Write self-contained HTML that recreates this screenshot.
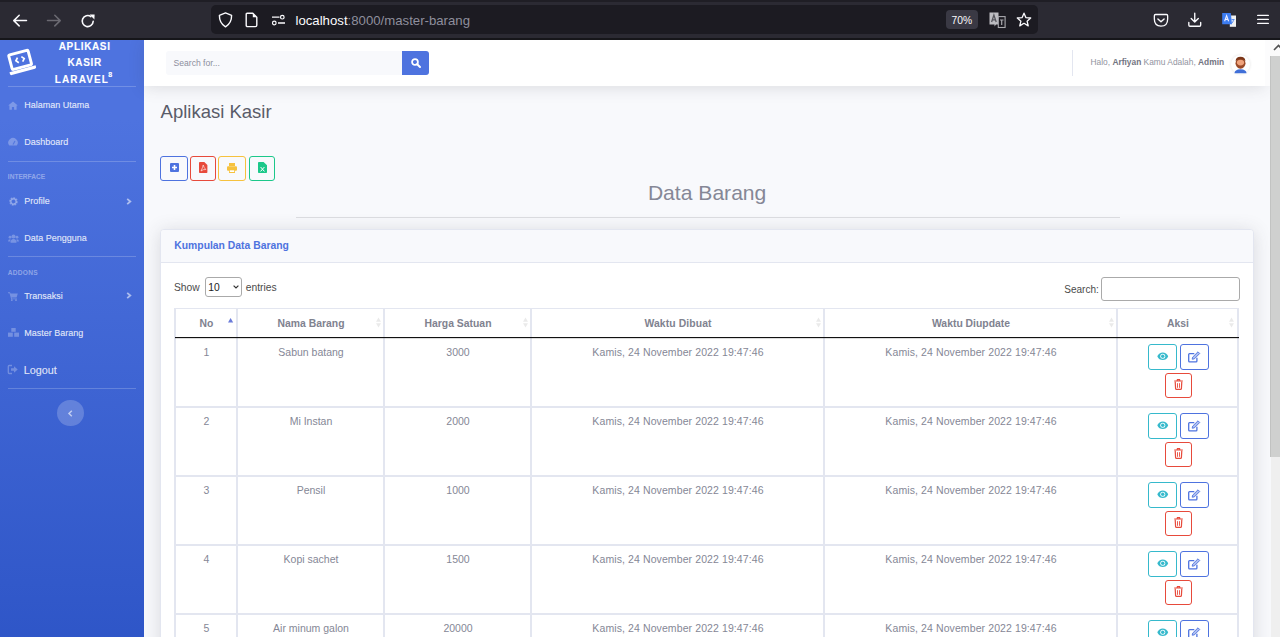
<!DOCTYPE html>
<html><head><meta charset="utf-8">
<style>
*{box-sizing:border-box;margin:0;padding:0}
html,body{width:1280px;height:637px;overflow:hidden;background:#2b2a33;font-family:"Liberation Sans",sans-serif}
.a{position:absolute;white-space:nowrap;line-height:1}
.r{position:absolute}
#page{position:absolute;left:0;top:40px;width:1280px;height:597px;background:#f8f9fc;overflow:hidden}
#side{position:absolute;left:0;top:0;width:144px;height:597px;background:linear-gradient(180deg,#4e73df 80px,#224abe 807px)}
.hr{position:absolute;left:8px;width:128px;height:1px;background:rgba(255,255,255,.2)}
svg{position:absolute;overflow:visible}
.btn{position:absolute;border:1px solid;border-radius:3px}
</style></head><body>
<div class="r" style="left:0;top:0;width:1280px;height:2px;background:#1f1e25"></div><div class="r" style="left:0;top:2px;width:1280px;height:36px;background:#2b2a33"></div><div class="r" style="left:0;top:38px;width:1280px;height:2px;background:#16161a"></div><div class="r" style="left:211px;top:5px;width:827px;height:29px;background:#1c1b22;border-radius:5px"></div><div class="a" style="left:295.50px;top:14.12px;font-size:13.2px;color:#fbfbfe;">localhost<span style="color:#8f8f9d">:8000/master-barang</span></div>
<div class="r" style="left:945.5px;top:10.3px;width:32px;height:18.5px;background:#3a3944;border-radius:4px"></div><div class="a" style="left:951.50px;top:15.88px;font-size:10.3px;color:#fbfbfe;">70%</div>
<svg style="left:12px;top:14px" width="16" height="14" viewBox="0 0 16 14"><path d="M14.5 6.6 H2 M7.2 1.3 L1.8 6.6 L7.2 11.9" stroke="#fbfbfe" stroke-width="1.5" fill="none" stroke-linecap="round" stroke-linejoin="round"/></svg><svg style="left:46px;top:14px" width="16" height="14" viewBox="0 0 16 14"><path d="M1.5 6.6 H14 M8.8 1.3 L14.2 6.6 L8.8 11.9" stroke="#6b6a72" stroke-width="1.5" fill="none" stroke-linecap="round" stroke-linejoin="round"/></svg><svg style="left:80px;top:13px" width="16" height="16" viewBox="0 0 16 16"><path d="M13.2 8.3 A5.5 5.5 0 1 1 10.9 3.6" stroke="#fbfbfe" stroke-width="1.6" fill="none" stroke-linecap="round"/><path d="M9.6 1.6 L14.6 1.4 L14.4 6.4Z" fill="#fbfbfe"/></svg><svg style="left:218px;top:12px" width="15" height="16" viewBox="0 0 15 16"><path d="M7.5 0.9 L13.6 3.3 Q13.8 11 7.5 14.9 Q1.2 11 1.4 3.3Z" stroke="#fbfbfe" stroke-width="1.4" fill="none" stroke-linejoin="round"/></svg><svg style="left:245.3px;top:12.3px" width="13" height="16" viewBox="0 0 13 16"><path d="M2.2 1.2 H7.8 L11.8 5.2 V13.2 Q11.8 14.6 10.4 14.6 H2.6 Q1.2 14.6 1.2 13.2 V2.4 Q1.2 1.2 2.2 1.2Z" stroke="#fbfbfe" stroke-width="1.4" fill="none" stroke-linejoin="round"/><path d="M7.8 1.2 V5.2 H11.8Z" fill="#fbfbfe"/></svg><svg style="left:271px;top:14px" width="15" height="12" viewBox="0 0 15 12"><path d="M1 3.2 H8.5 M7 9 H14" stroke="#fbfbfe" stroke-width="1.3"/><circle cx="11.3" cy="3.2" r="1.8" stroke="#fbfbfe" stroke-width="1.2" fill="none"/><circle cx="3.3" cy="9" r="1.8" stroke="#fbfbfe" stroke-width="1.2" fill="none"/></svg><svg style="left:988.5px;top:11.5px" width="18" height="17" viewBox="0 0 18 17"><path d="M0.5 0.5 H9.5 V12.5 H7 L5.5 14.5 V12.5 H0.5Z" fill="#bdbdc2"/><rect x="9.3" y="4.6" width="6.8" height="10.9" fill="#1c1b22" stroke="#a9a9ae" stroke-width="1.1"/><path d="M2.6 10 L4.9 3 L7.2 10 M3.5 7.8 H6.3" stroke="#55555c" stroke-width="1.3" fill="none"/><path d="M11 8 H14.5 M12.7 8 V13" stroke="#a9a9ae" stroke-width="1.2"/></svg><svg style="left:1015.5px;top:12px" width="16" height="16" viewBox="0 0 17 17"><path d="M8.5 1.3 L10.6 6 L15.6 6.4 L11.8 9.7 L13 14.7 L8.5 12 L4 14.7 L5.2 9.7 L1.4 6.4 L6.4 6 Z" stroke="#fbfbfe" stroke-width="1.4" fill="none" stroke-linejoin="round"/></svg><svg style="left:1152.5px;top:12.8px" width="16" height="15" viewBox="0 0 17 16"><path d="M2.6 1.6 H14.4 Q15.6 1.6 15.6 2.8 V6.5 Q15.6 14 8.5 14 Q1.4 14 1.4 6.5 V2.8 Q1.4 1.6 2.6 1.6Z" stroke="#fbfbfe" stroke-width="1.4" fill="none"/><path d="M5.2 6.3 L8.5 9.4 L11.8 6.3" stroke="#fbfbfe" stroke-width="1.5" fill="none" stroke-linecap="round" stroke-linejoin="round"/></svg><svg style="left:1187px;top:11.5px" width="15.5" height="16" viewBox="0 0 17 17"><path d="M8.5 1 V10.5 M4.6 6.8 L8.5 10.7 L12.4 6.8" stroke="#fbfbfe" stroke-width="1.5" fill="none" stroke-linecap="round" stroke-linejoin="round"/><path d="M2 11.2 V14 Q2 15.3 3.3 15.3 H13.7 Q15 15.3 15 14 V11.2" stroke="#fbfbfe" stroke-width="1.5" fill="none" stroke-linecap="round"/></svg><svg style="left:1221px;top:12px" width="16" height="16" viewBox="0 0 16 16"><rect x="8.8" y="3.5" width="6.2" height="11.3" fill="#f1f1f1"/><path d="M1.2 0.9 H9.8 L11 12.2 H1.2Z" fill="#3c7cf0"/><path d="M3.6 9.2 L5.6 3.6 L7.6 9.2 M4.3 7.4 H6.9" stroke="#eef" stroke-width="1.1" fill="none"/><path d="M10.5 7.5 H13.5 M12.6 7.5 Q12 10.5 10.6 11.5" stroke="#4f86f0" stroke-width="0.9" fill="none"/></svg><svg style="left:1256px;top:13px" width="14" height="13" viewBox="0 0 14 13"><path d="M1.7 2.4 H12.3 M1.7 6.4 H12.3 M1.7 10.4 H12.3" stroke="#fbfbfe" stroke-width="1.4" stroke-linecap="round"/></svg><div id="page">
<div id="side"></div><div class="a" style="left:34.70px;width:100.00px;text-align:center;top:2.20px;font-size:10px;color:#fff;font-weight:bold;letter-spacing:0.65px;-webkit-text-stroke:0.1px #fff;">APLIKASI</div>
<div class="a" style="left:34.70px;width:100.00px;text-align:center;top:18.40px;font-size:10px;color:#fff;font-weight:bold;letter-spacing:0.65px;-webkit-text-stroke:0.1px #fff;">KASIR</div>
<div class="a" style="left:33.50px;width:100.00px;text-align:center;top:34.50px;font-size:10px;color:#fff;font-weight:bold;letter-spacing:1.1px;-webkit-text-stroke:0.1px #fff;">LARAVEL<sup style="font-size:7px;position:relative;top:-3.3px;vertical-align:top;letter-spacing:0;margin-left:-0.8px">8</sup></div>
<div class="hr" style="top:45.8px"></div><div class="hr" style="top:120.6px"></div><div class="hr" style="top:215.8px"></div><div class="hr" style="top:348.3px"></div><div class="a" style="left:24.20px;top:61.28px;font-size:9px;color:rgba(255,255,255,.82);-webkit-text-stroke:0.2px rgba(255,255,255,.6);">Halaman Utama</div>
<div class="a" style="left:24.20px;top:98.18px;font-size:9px;color:rgba(255,255,255,.82);-webkit-text-stroke:0.2px rgba(255,255,255,.6);">Dashboard</div>
<div class="a" style="left:24.20px;top:156.68px;font-size:9px;color:rgba(255,255,255,.82);-webkit-text-stroke:0.2px rgba(255,255,255,.6);">Profile</div>
<div class="a" style="left:24.20px;top:193.58px;font-size:9px;color:rgba(255,255,255,.82);-webkit-text-stroke:0.2px rgba(255,255,255,.6);">Data Pengguna</div>
<div class="a" style="left:24.20px;top:252.08px;font-size:9px;color:rgba(255,255,255,.82);-webkit-text-stroke:0.2px rgba(255,255,255,.6);">Transaksi</div>
<div class="a" style="left:24.20px;top:288.98px;font-size:9px;color:rgba(255,255,255,.82);-webkit-text-stroke:0.2px rgba(255,255,255,.6);">Master Barang</div>
<div class="a" style="left:23.80px;top:324.66px;font-size:10.8px;color:rgba(255,255,255,.82);-webkit-text-stroke:0.2px rgba(255,255,255,.6);">Logout</div>
<div class="a" style="left:7.80px;top:134.41px;font-size:6.6px;color:rgba(255,255,255,.4);font-weight:bold;">INTERFACE</div>
<div class="a" style="left:7.80px;top:230.01px;font-size:6.6px;color:rgba(255,255,255,.4);font-weight:bold;letter-spacing:0.25px;">ADDONS</div>
<svg style="left:8px;top:60.5px" width="10" height="9" viewBox="0 0 10 9"><path d="M5 0.5 L9.8 4.6 L8.6 4.6 L8.6 8.8 L6.1 8.8 L6.1 6 L3.9 6 L3.9 8.8 L1.4 8.8 L1.4 4.6 L0.2 4.6 Z" fill="rgba(255,255,255,.27)"/></svg><svg style="left:8px;top:98.30000000000001px" width="10" height="8" viewBox="0 0 10 8"><path d="M1.3 7.6 A4.7 4.7 0 1 1 8.7 7.6 Z" fill="rgba(255,255,255,.27)"/><path d="M5 6.5 L7 3" stroke="rgba(78,115,222,.9)" stroke-width="1.1"/></svg><svg style="left:8.5px;top:156.5px" width="9" height="9" viewBox="0 0 9 9"><circle cx="4.5" cy="4.5" r="3.3" fill="none" stroke="rgba(255,255,255,.27)" stroke-width="2.2" stroke-dasharray="1.6 0.9"/><circle cx="4.5" cy="4.5" r="2.6" fill="none" stroke="rgba(255,255,255,.27)" stroke-width="1.6"/></svg><svg style="left:8px;top:193.5px" width="11" height="9" viewBox="0 0 11 9"><circle cx="5.5" cy="2.6" r="2" fill="rgba(255,255,255,.27)"/><circle cx="2" cy="3.2" r="1.4" fill="rgba(255,255,255,.27)"/><circle cx="9" cy="3.2" r="1.4" fill="rgba(255,255,255,.27)"/><path d="M2.5 8.8 Q2.5 5 5.5 5 Q8.5 5 8.5 8.8Z M0 7.5 Q0 5.2 2.4 5.2 L2.4 7.5Z M11 7.5 Q11 5.2 8.6 5.2 L8.6 7.5Z" fill="rgba(255,255,255,.27)"/></svg><svg style="left:8px;top:251.5px" width="10" height="9" viewBox="0 0 10 9"><path d="M0 0.3 L2 0.3 L2.6 1.5 L9.8 1.5 L8.6 5.6 L3.6 5.6 L3.9 6.5 L9 6.5 L9 7.2 L3.2 7.2 L1.5 1.2 L0 1.2Z" fill="rgba(255,255,255,.27)"/><circle cx="3.8" cy="8.2" r="0.9" fill="rgba(255,255,255,.27)"/><circle cx="8" cy="8.2" r="0.9" fill="rgba(255,255,255,.27)"/></svg><svg style="left:8px;top:288px" width="11" height="9" viewBox="0 0 11 9"><rect x="3.3" y="0" width="4.4" height="3.8" fill="rgba(255,255,255,.27)"/><rect x="0" y="4.6" width="4.8" height="4.2" fill="rgba(255,255,255,.27)"/><rect x="6.2" y="4.6" width="4.8" height="4.2" fill="rgba(255,255,255,.27)"/></svg><svg style="left:8px;top:325px" width="10" height="9" viewBox="0 0 10 9"><path d="M4 0.5 L1.2 0.5 Q0.3 0.5 0.3 1.4 L0.3 7.6 Q0.3 8.5 1.2 8.5 L4 8.5" stroke="rgba(255,255,255,.27)" stroke-width="1.3" fill="none"/><path d="M3 3.3 L6 3.3 L6 1.2 L9.7 4.5 L6 7.8 L6 5.7 L3 5.7Z" fill="rgba(255,255,255,.27)"/></svg><svg style="left:126px;top:157.5px" width="6" height="7" viewBox="0 0 6 7"><path d="M1.2 0.9 L4.3 3.5 L1.2 6.1" stroke="rgba(255,255,255,.55)" stroke-width="1.8" fill="none"/></svg><svg style="left:126px;top:252.3px" width="6" height="7" viewBox="0 0 6 7"><path d="M1.2 0.9 L4.3 3.5 L1.2 6.1" stroke="rgba(255,255,255,.55)" stroke-width="1.8" fill="none"/></svg><div class="r" style="left:57.4px;top:359.5px;width:26.6px;height:26.6px;border-radius:50%;background:rgba(255,255,255,.2)"></div><svg style="left:68px;top:369.5px" width="5" height="7" viewBox="0 0 5 7"><path d="M3.8 0.8 L1 3.5 L3.8 6.2" stroke="rgba(255,255,255,.6)" stroke-width="1.5" fill="none"/></svg><svg style="left:6px;top:8px" width="32" height="30" viewBox="0 0 32 30"><g transform="rotate(-15 16 15)"><rect x="5" y="4" width="20" height="15" rx="1.2" fill="none" stroke="#fff" stroke-width="2.9"/><path d="M1.5 20.8 L28.5 20.8 L28.5 22.6 Q28.5 24 27 24 L3 24 Q1.5 24 1.5 22.6Z" fill="#fff"/><path d="M13 8.7 L10.7 11.3 L13 13.9 M17 8.7 L19.3 11.3 L17 13.9" stroke="#fff" stroke-width="1.7" fill="none"/></g></svg><div class="r" style="left:144px;top:0;width:1121px;height:46px;background:#fff;box-shadow:0 2px 16px rgba(58,59,69,.15)"></div><div class="r" style="left:166px;top:11px;width:236px;height:24px;background:#f8f9fc;border-radius:3px 0 0 3px"></div><div class="r" style="left:402px;top:11px;width:27px;height:24px;background:#4e73df;border-radius:0 3px 3px 0"></div><svg style="left:410.5px;top:17.8px" width="10" height="10" viewBox="0 0 10 10"><circle cx="4" cy="4" r="2.9" stroke="#fff" stroke-width="1.8" fill="none"/><path d="M6.2 6.2 L9 9" stroke="#fff" stroke-width="2" stroke-linecap="round"/></svg><div class="a" style="left:173.50px;top:19.22px;font-size:8.6px;color:#8d8f9c;">Search for...</div>
<div class="r" style="left:1071.5px;top:10px;width:1px;height:26px;background:#e3e6f0"></div><div class="a" style="left:1090.50px;top:18.09px;font-size:8.4px;color:#9193a0;">Halo, <b style="color:#737582">Arfiyan</b> Kamu Adalah, <b style="color:#737582">Admin</b></div>
<div class="r" style="left:1231px;top:15px;width:19px;height:19px;border-radius:50%;background:#fff;box-shadow:0 0 3px rgba(0,0,0,.12)"></div><svg style="left:1233px;top:15.5px" width="15" height="18" viewBox="0 0 15 18"><path d="M1.5 17.2 Q1.5 13.5 7.5 13.2 Q13.5 13.5 13.5 17.2Z" fill="#3f6fd8"/><ellipse cx="7.5" cy="7.3" rx="5" ry="5.4" fill="#9b4a28"/><ellipse cx="7.5" cy="6.6" rx="3.6" ry="2.8" fill="#f0a37c"/><path d="M2.6 5 Q3 0.8 7.5 0.8 Q12 0.8 12.4 5 Q10 3 7.5 3.3 Q5 3 2.6 5Z" fill="#7a3518"/></svg><div class="r" style="left:1265px;top:0;width:6px;height:46px;background:#fcfcfd"></div><div class="r" style="left:1270.5px;top:0;width:10px;height:597px;background:#efefef"></div><div class="r" style="left:1270px;top:0;width:10px;height:16px;background:#fafafa"></div><div class="r" style="left:1270px;top:16px;width:12px;height:401px;background:#cfd0cf;border-left:1px solid #c2c3c2"></div><svg style="left:1272.5px;top:3.5px" width="10" height="7" viewBox="0 0 10 7"><path d="M1 6 L5.5 1.5 L10 6" stroke="#505050" stroke-width="1.6" fill="none"/></svg><div class="a" style="left:160.60px;top:62.84px;font-size:18.5px;color:#5a5c69;">Aplikasi Kasir</div>
<div class="btn" style="left:160px;top:116px;width:28px;height:25px;border-color:#4e73df"></div><div class="btn" style="left:190px;top:116px;width:26px;height:25px;border-color:#e74a3b"></div><div class="btn" style="left:218px;top:116px;width:28px;height:25px;border-color:#f6c23e"></div><div class="btn" style="left:249px;top:116px;width:26px;height:25px;border-color:#1cc88a"></div><svg style="left:169.5px;top:123.3px" width="9" height="9" viewBox="0 0 9 9"><rect width="9" height="9" rx="1" fill="#4e73df"/><path d="M4.5 2 V7 M2 4.5 H7" stroke="#fff" stroke-width="1.6"/></svg><svg style="left:198.6px;top:122.3px" width="8.4" height="11" viewBox="0 0 8.4 11"><path d="M0 0.8 Q0 0 0.8 0 L5.3 0 L8.4 3 L8.4 10.2 Q8.4 11 7.6 11 L0.8 11 Q0 11 0 10.2Z" fill="#e74a3b"/><path d="M2 9 Q4 5 4.2 3 Q5 6 6.8 7.5 Q4 7.2 2 9Z" stroke="#fff" stroke-width="0.6" fill="none"/></svg><svg style="left:226.7px;top:122.8px" width="10" height="10" viewBox="0 0 10 10"><rect x="2" y="0" width="6" height="3" fill="#f6c23e"/><rect x="0" y="3.2" width="10" height="4.6" rx="1" fill="#f6c23e"/><rect x="2" y="6.5" width="6" height="3.5" fill="#f6c23e"/><rect x="2.8" y="7.3" width="4.4" height="1.7" fill="#fff"/></svg><svg style="left:257.5px;top:122.3px" width="9" height="11" viewBox="0 0 9 11"><path d="M0 0.8 Q0 0 0.8 0 L5.6 0 L9 3.2 L9 10.2 Q9 11 8.2 11 L0.8 11 Q0 11 0 10.2Z" fill="#1cc88a"/><path d="M2.6 5 L6.4 9.4 M6.4 5 L2.6 9.4" stroke="#fff" stroke-width="1"/></svg><div class="a" style="left:647.90px;top:142.13px;font-size:21.1px;color:#858796;">Data Barang</div>
<div class="r" style="left:296px;top:177px;width:824px;height:1px;background:#dcdde1"></div><div class="r" style="left:160px;top:189px;width:1093.5px;height:460px;background:#fff;border:1px solid #e3e6f0;border-radius:4px;box-shadow:0 2px 18px rgba(58,59,69,.17)"></div><div class="r" style="left:161px;top:190px;width:1091.5px;height:33px;background:#f8f9fc;border-bottom:1px solid #e3e6f0;border-radius:3px 3px 0 0"></div><div class="a" style="left:174.30px;top:201.02px;font-size:10.37px;color:#4e73df;font-weight:bold;">Kumpulan Data Barang</div>
<div class="a" style="left:174.00px;top:242.98px;font-size:10.3px;color:#4b4b4b;">Show</div>
<div class="r" style="left:205px;top:236.5px;width:37px;height:20.5px;border:1px solid #aaa;border-radius:3px;background:#fff"></div><div class="a" style="left:208.30px;top:242.98px;font-size:10.3px;color:#222;">10</div>
<svg style="left:233px;top:245px" width="6" height="4" viewBox="0 0 6 4"><path d="M0.6 0.6 L3 3 L5.4 0.6" stroke="#333" stroke-width="1.2" fill="none"/></svg><div class="a" style="left:245.80px;top:242.98px;font-size:10.3px;color:#4b4b4b;">entries</div>
<div class="a" style="left:1064.30px;top:244.53px;font-size:10px;color:#4b4b4b;">Search:</div>
<div class="r" style="left:1101px;top:236.5px;width:138.5px;height:24px;border:1px solid #aaa;border-radius:3px;background:#fff"></div><div class="r" style="left:175px;top:268px;width:1064px;height:1px;background:#e3e6f0"></div><div class="r" style="left:174.3px;top:268px;width:1.8px;height:400px;background:#e3e6f0"></div><div class="r" style="left:236.3px;top:268px;width:1.8px;height:400px;background:#e3e6f0"></div><div class="r" style="left:383.3px;top:268px;width:1.8px;height:400px;background:#e3e6f0"></div><div class="r" style="left:530.3px;top:268px;width:1.8px;height:400px;background:#e3e6f0"></div><div class="r" style="left:823.3px;top:268px;width:1.8px;height:400px;background:#e3e6f0"></div><div class="r" style="left:1116.3px;top:268px;width:1.8px;height:400px;background:#e3e6f0"></div><div class="r" style="left:1237.3px;top:268px;width:1.8px;height:400px;background:#e3e6f0"></div><div class="r" style="left:175px;top:297px;width:1064px;height:1px;background:#111"></div><div class="r" style="left:175px;top:298px;width:1064px;height:1px;background:rgba(17,17,17,.15)"></div><div class="r" style="left:175px;top:366.0px;width:1064px;height:1.5px;background:#e3e6f0"></div><div class="r" style="left:175px;top:435.0px;width:1064px;height:1.5px;background:#e3e6f0"></div><div class="r" style="left:175px;top:504.0px;width:1064px;height:1.5px;background:#e3e6f0"></div><div class="r" style="left:175px;top:573.0px;width:1064px;height:1.5px;background:#e3e6f0"></div><div class="a" style="left:176.00px;width:61.00px;text-align:center;top:278.79px;font-size:10.4px;color:#80828f;font-weight:bold;">No</div>
<div class="a" style="left:238.00px;width:146.00px;text-align:center;top:278.79px;font-size:10.4px;color:#80828f;font-weight:bold;">Nama Barang</div>
<div class="a" style="left:385.00px;width:146.00px;text-align:center;top:278.79px;font-size:10.4px;color:#80828f;font-weight:bold;">Harga Satuan</div>
<div class="a" style="left:532.00px;width:292.00px;text-align:center;top:278.79px;font-size:10.4px;color:#80828f;font-weight:bold;letter-spacing:0.1px;">Waktu Dibuat</div>
<div class="a" style="left:825.00px;width:292.00px;text-align:center;top:278.79px;font-size:10.4px;color:#80828f;font-weight:bold;">Waktu Diupdate</div>
<div class="a" style="left:1118.00px;width:120.00px;text-align:center;top:278.79px;font-size:10.4px;color:#80828f;font-weight:bold;">Aksi</div>
<svg style="left:227.8px;top:277.8px" width="5.2" height="4.4" viewBox="0 0 5.2 4.4"><path d="M2.6 0 L5.2 4.4 L0 4.4Z" fill="#6a7bd9"/></svg><svg style="left:375.5px;top:277px" width="5" height="11" viewBox="0 0 5 11"><path d="M2.5 0.5 L5 4.8 L0 4.8Z M2.5 10.5 L5 6.2 L0 6.2Z" fill="#eaeaea"/></svg><svg style="left:522.5px;top:277px" width="5" height="11" viewBox="0 0 5 11"><path d="M2.5 0.5 L5 4.8 L0 4.8Z M2.5 10.5 L5 6.2 L0 6.2Z" fill="#eaeaea"/></svg><svg style="left:815.5px;top:277px" width="5" height="11" viewBox="0 0 5 11"><path d="M2.5 0.5 L5 4.8 L0 4.8Z M2.5 10.5 L5 6.2 L0 6.2Z" fill="#eaeaea"/></svg><svg style="left:1108.5px;top:277px" width="5" height="11" viewBox="0 0 5 11"><path d="M2.5 0.5 L5 4.8 L0 4.8Z M2.5 10.5 L5 6.2 L0 6.2Z" fill="#eaeaea"/></svg><svg style="left:1229.0px;top:277px" width="5" height="11" viewBox="0 0 5 11"><path d="M2.5 0.5 L5 4.8 L0 4.8Z M2.5 10.5 L5 6.2 L0 6.2Z" fill="#eaeaea"/></svg><div class="a" style="left:176.00px;width:61.00px;text-align:center;top:306.91px;font-size:10.5px;color:#858796;">1</div>
<div class="a" style="left:238.00px;width:146.00px;text-align:center;top:306.91px;font-size:10.5px;color:#858796;">Sabun batang</div>
<div class="a" style="left:385.00px;width:146.00px;text-align:center;top:306.91px;font-size:10.5px;color:#858796;">3000</div>
<div class="a" style="left:532.00px;width:292.00px;text-align:center;top:306.91px;font-size:10.5px;color:#858796;letter-spacing:0.1px;">Kamis, 24 November 2022 19:47:46</div>
<div class="a" style="left:825.00px;width:292.00px;text-align:center;top:306.91px;font-size:10.5px;color:#858796;letter-spacing:0.1px;">Kamis, 24 November 2022 19:47:46</div>
<div class="btn" style="left:1148px;top:304.3px;width:29px;height:25.5px;border-color:#36b9cc"></div><div class="btn" style="left:1180px;top:304.3px;width:29px;height:25.5px;border-color:#4e73df"></div><div class="btn" style="left:1165px;top:333.0px;width:27px;height:25px;border-color:#e74a3b"></div><svg style="left:1156.6px;top:312.0px" width="11.5" height="8.5" viewBox="0 0 11.5 8.5"><path d="M0.3 4.25 C2.2 -0.9 9.3 -0.9 11.2 4.25 C9.3 9.4 2.2 9.4 0.3 4.25Z" fill="#36b9cc"/><circle cx="5.75" cy="4.25" r="2.5" fill="#fff"/><circle cx="5.75" cy="4.25" r="1.7" fill="#36b9cc"/></svg><svg style="left:1188.2px;top:310.8px" width="12.5" height="11.5" viewBox="0 0 12.5 11.5"><path d="M6.3 2.6 L1.6 2.6 Q0.7 2.6 0.7 3.5 L0.7 9.9 Q0.7 10.8 1.6 10.8 L8 10.8 Q8.9 10.8 8.9 9.9 L8.9 6.8" stroke="#4e73df" stroke-width="1.3" fill="none"/><path d="M4.2 8.2 L4.6 6.2 L10 0.8 L11.7 2.5 L6.3 7.9 Z" stroke="#4e73df" stroke-width="0.9" fill="rgba(78,115,223,.45)" stroke-linejoin="round"/></svg><svg style="left:1173.8px;top:339.3px" width="9" height="11" viewBox="0 0 9 11"><path d="M0.2 2 H8.8 M3 2 L3.4 0.6 H5.6 L6 2" stroke="#e74a3b" stroke-width="1.1" fill="none"/><path d="M1.2 2.6 L1.6 9.6 Q1.7 10.4 2.5 10.4 H6.5 Q7.3 10.4 7.4 9.6 L7.8 2.6" stroke="#e74a3b" stroke-width="1.2" fill="none"/><path d="M3.5 4.2 V8.8 M5.5 4.2 V8.8" stroke="#e74a3b" stroke-width="0.9"/></svg><div class="a" style="left:176.00px;width:61.00px;text-align:center;top:375.91px;font-size:10.5px;color:#858796;">2</div>
<div class="a" style="left:238.00px;width:146.00px;text-align:center;top:375.91px;font-size:10.5px;color:#858796;">Mi Instan</div>
<div class="a" style="left:385.00px;width:146.00px;text-align:center;top:375.91px;font-size:10.5px;color:#858796;">2000</div>
<div class="a" style="left:532.00px;width:292.00px;text-align:center;top:375.91px;font-size:10.5px;color:#858796;letter-spacing:0.1px;">Kamis, 24 November 2022 19:47:46</div>
<div class="a" style="left:825.00px;width:292.00px;text-align:center;top:375.91px;font-size:10.5px;color:#858796;letter-spacing:0.1px;">Kamis, 24 November 2022 19:47:46</div>
<div class="btn" style="left:1148px;top:373.3px;width:29px;height:25.5px;border-color:#36b9cc"></div><div class="btn" style="left:1180px;top:373.3px;width:29px;height:25.5px;border-color:#4e73df"></div><div class="btn" style="left:1165px;top:402.0px;width:27px;height:25px;border-color:#e74a3b"></div><svg style="left:1156.6px;top:381.0px" width="11.5" height="8.5" viewBox="0 0 11.5 8.5"><path d="M0.3 4.25 C2.2 -0.9 9.3 -0.9 11.2 4.25 C9.3 9.4 2.2 9.4 0.3 4.25Z" fill="#36b9cc"/><circle cx="5.75" cy="4.25" r="2.5" fill="#fff"/><circle cx="5.75" cy="4.25" r="1.7" fill="#36b9cc"/></svg><svg style="left:1188.2px;top:379.8px" width="12.5" height="11.5" viewBox="0 0 12.5 11.5"><path d="M6.3 2.6 L1.6 2.6 Q0.7 2.6 0.7 3.5 L0.7 9.9 Q0.7 10.8 1.6 10.8 L8 10.8 Q8.9 10.8 8.9 9.9 L8.9 6.8" stroke="#4e73df" stroke-width="1.3" fill="none"/><path d="M4.2 8.2 L4.6 6.2 L10 0.8 L11.7 2.5 L6.3 7.9 Z" stroke="#4e73df" stroke-width="0.9" fill="rgba(78,115,223,.45)" stroke-linejoin="round"/></svg><svg style="left:1173.8px;top:408.3px" width="9" height="11" viewBox="0 0 9 11"><path d="M0.2 2 H8.8 M3 2 L3.4 0.6 H5.6 L6 2" stroke="#e74a3b" stroke-width="1.1" fill="none"/><path d="M1.2 2.6 L1.6 9.6 Q1.7 10.4 2.5 10.4 H6.5 Q7.3 10.4 7.4 9.6 L7.8 2.6" stroke="#e74a3b" stroke-width="1.2" fill="none"/><path d="M3.5 4.2 V8.8 M5.5 4.2 V8.8" stroke="#e74a3b" stroke-width="0.9"/></svg><div class="a" style="left:176.00px;width:61.00px;text-align:center;top:444.91px;font-size:10.5px;color:#858796;">3</div>
<div class="a" style="left:238.00px;width:146.00px;text-align:center;top:444.91px;font-size:10.5px;color:#858796;">Pensil</div>
<div class="a" style="left:385.00px;width:146.00px;text-align:center;top:444.91px;font-size:10.5px;color:#858796;">1000</div>
<div class="a" style="left:532.00px;width:292.00px;text-align:center;top:444.91px;font-size:10.5px;color:#858796;letter-spacing:0.1px;">Kamis, 24 November 2022 19:47:46</div>
<div class="a" style="left:825.00px;width:292.00px;text-align:center;top:444.91px;font-size:10.5px;color:#858796;letter-spacing:0.1px;">Kamis, 24 November 2022 19:47:46</div>
<div class="btn" style="left:1148px;top:442.3px;width:29px;height:25.5px;border-color:#36b9cc"></div><div class="btn" style="left:1180px;top:442.3px;width:29px;height:25.5px;border-color:#4e73df"></div><div class="btn" style="left:1165px;top:471.0px;width:27px;height:25px;border-color:#e74a3b"></div><svg style="left:1156.6px;top:450.0px" width="11.5" height="8.5" viewBox="0 0 11.5 8.5"><path d="M0.3 4.25 C2.2 -0.9 9.3 -0.9 11.2 4.25 C9.3 9.4 2.2 9.4 0.3 4.25Z" fill="#36b9cc"/><circle cx="5.75" cy="4.25" r="2.5" fill="#fff"/><circle cx="5.75" cy="4.25" r="1.7" fill="#36b9cc"/></svg><svg style="left:1188.2px;top:448.8px" width="12.5" height="11.5" viewBox="0 0 12.5 11.5"><path d="M6.3 2.6 L1.6 2.6 Q0.7 2.6 0.7 3.5 L0.7 9.9 Q0.7 10.8 1.6 10.8 L8 10.8 Q8.9 10.8 8.9 9.9 L8.9 6.8" stroke="#4e73df" stroke-width="1.3" fill="none"/><path d="M4.2 8.2 L4.6 6.2 L10 0.8 L11.7 2.5 L6.3 7.9 Z" stroke="#4e73df" stroke-width="0.9" fill="rgba(78,115,223,.45)" stroke-linejoin="round"/></svg><svg style="left:1173.8px;top:477.3px" width="9" height="11" viewBox="0 0 9 11"><path d="M0.2 2 H8.8 M3 2 L3.4 0.6 H5.6 L6 2" stroke="#e74a3b" stroke-width="1.1" fill="none"/><path d="M1.2 2.6 L1.6 9.6 Q1.7 10.4 2.5 10.4 H6.5 Q7.3 10.4 7.4 9.6 L7.8 2.6" stroke="#e74a3b" stroke-width="1.2" fill="none"/><path d="M3.5 4.2 V8.8 M5.5 4.2 V8.8" stroke="#e74a3b" stroke-width="0.9"/></svg><div class="a" style="left:176.00px;width:61.00px;text-align:center;top:513.91px;font-size:10.5px;color:#858796;">4</div>
<div class="a" style="left:238.00px;width:146.00px;text-align:center;top:513.91px;font-size:10.5px;color:#858796;">Kopi sachet</div>
<div class="a" style="left:385.00px;width:146.00px;text-align:center;top:513.91px;font-size:10.5px;color:#858796;">1500</div>
<div class="a" style="left:532.00px;width:292.00px;text-align:center;top:513.91px;font-size:10.5px;color:#858796;letter-spacing:0.1px;">Kamis, 24 November 2022 19:47:46</div>
<div class="a" style="left:825.00px;width:292.00px;text-align:center;top:513.91px;font-size:10.5px;color:#858796;letter-spacing:0.1px;">Kamis, 24 November 2022 19:47:46</div>
<div class="btn" style="left:1148px;top:511.29999999999995px;width:29px;height:25.5px;border-color:#36b9cc"></div><div class="btn" style="left:1180px;top:511.29999999999995px;width:29px;height:25.5px;border-color:#4e73df"></div><div class="btn" style="left:1165px;top:540.0px;width:27px;height:25px;border-color:#e74a3b"></div><svg style="left:1156.6px;top:519.0px" width="11.5" height="8.5" viewBox="0 0 11.5 8.5"><path d="M0.3 4.25 C2.2 -0.9 9.3 -0.9 11.2 4.25 C9.3 9.4 2.2 9.4 0.3 4.25Z" fill="#36b9cc"/><circle cx="5.75" cy="4.25" r="2.5" fill="#fff"/><circle cx="5.75" cy="4.25" r="1.7" fill="#36b9cc"/></svg><svg style="left:1188.2px;top:517.8px" width="12.5" height="11.5" viewBox="0 0 12.5 11.5"><path d="M6.3 2.6 L1.6 2.6 Q0.7 2.6 0.7 3.5 L0.7 9.9 Q0.7 10.8 1.6 10.8 L8 10.8 Q8.9 10.8 8.9 9.9 L8.9 6.8" stroke="#4e73df" stroke-width="1.3" fill="none"/><path d="M4.2 8.2 L4.6 6.2 L10 0.8 L11.7 2.5 L6.3 7.9 Z" stroke="#4e73df" stroke-width="0.9" fill="rgba(78,115,223,.45)" stroke-linejoin="round"/></svg><svg style="left:1173.8px;top:546.3px" width="9" height="11" viewBox="0 0 9 11"><path d="M0.2 2 H8.8 M3 2 L3.4 0.6 H5.6 L6 2" stroke="#e74a3b" stroke-width="1.1" fill="none"/><path d="M1.2 2.6 L1.6 9.6 Q1.7 10.4 2.5 10.4 H6.5 Q7.3 10.4 7.4 9.6 L7.8 2.6" stroke="#e74a3b" stroke-width="1.2" fill="none"/><path d="M3.5 4.2 V8.8 M5.5 4.2 V8.8" stroke="#e74a3b" stroke-width="0.9"/></svg><div class="a" style="left:176.00px;width:61.00px;text-align:center;top:582.91px;font-size:10.5px;color:#858796;">5</div>
<div class="a" style="left:238.00px;width:146.00px;text-align:center;top:582.91px;font-size:10.5px;color:#858796;">Air minum galon</div>
<div class="a" style="left:385.00px;width:146.00px;text-align:center;top:582.91px;font-size:10.5px;color:#858796;">20000</div>
<div class="a" style="left:532.00px;width:292.00px;text-align:center;top:582.91px;font-size:10.5px;color:#858796;letter-spacing:0.1px;">Kamis, 24 November 2022 19:47:46</div>
<div class="a" style="left:825.00px;width:292.00px;text-align:center;top:582.91px;font-size:10.5px;color:#858796;letter-spacing:0.1px;">Kamis, 24 November 2022 19:47:46</div>
<div class="btn" style="left:1148px;top:580.3px;width:29px;height:25.5px;border-color:#36b9cc"></div><div class="btn" style="left:1180px;top:580.3px;width:29px;height:25.5px;border-color:#4e73df"></div><div class="btn" style="left:1165px;top:609.0px;width:27px;height:25px;border-color:#e74a3b"></div><svg style="left:1156.6px;top:588.0px" width="11.5" height="8.5" viewBox="0 0 11.5 8.5"><path d="M0.3 4.25 C2.2 -0.9 9.3 -0.9 11.2 4.25 C9.3 9.4 2.2 9.4 0.3 4.25Z" fill="#36b9cc"/><circle cx="5.75" cy="4.25" r="2.5" fill="#fff"/><circle cx="5.75" cy="4.25" r="1.7" fill="#36b9cc"/></svg><svg style="left:1188.2px;top:586.8px" width="12.5" height="11.5" viewBox="0 0 12.5 11.5"><path d="M6.3 2.6 L1.6 2.6 Q0.7 2.6 0.7 3.5 L0.7 9.9 Q0.7 10.8 1.6 10.8 L8 10.8 Q8.9 10.8 8.9 9.9 L8.9 6.8" stroke="#4e73df" stroke-width="1.3" fill="none"/><path d="M4.2 8.2 L4.6 6.2 L10 0.8 L11.7 2.5 L6.3 7.9 Z" stroke="#4e73df" stroke-width="0.9" fill="rgba(78,115,223,.45)" stroke-linejoin="round"/></svg><svg style="left:1173.8px;top:615.3px" width="9" height="11" viewBox="0 0 9 11"><path d="M0.2 2 H8.8 M3 2 L3.4 0.6 H5.6 L6 2" stroke="#e74a3b" stroke-width="1.1" fill="none"/><path d="M1.2 2.6 L1.6 9.6 Q1.7 10.4 2.5 10.4 H6.5 Q7.3 10.4 7.4 9.6 L7.8 2.6" stroke="#e74a3b" stroke-width="1.2" fill="none"/><path d="M3.5 4.2 V8.8 M5.5 4.2 V8.8" stroke="#e74a3b" stroke-width="0.9"/></svg></div>
</body></html>
